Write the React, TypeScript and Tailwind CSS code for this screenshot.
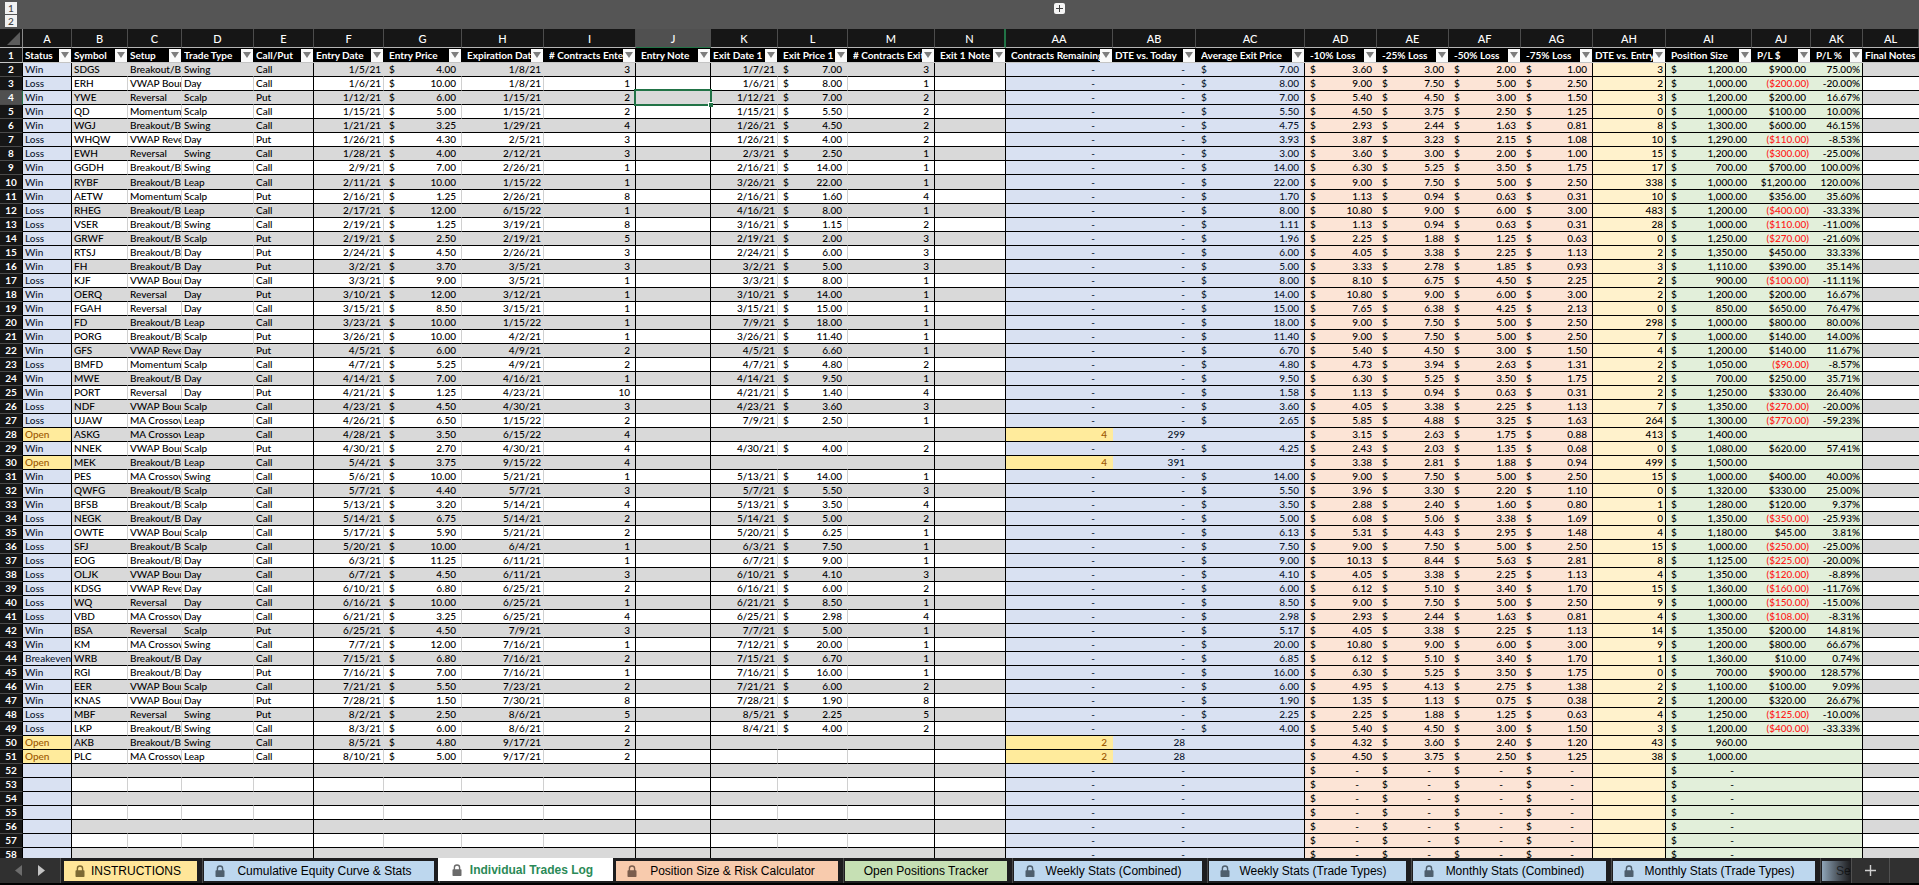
import React from "react";

type Column = {
  letter: string;
  title: string;
  width: string;
  pad: string;
  edge: "black" | "grid" | "none";
  fill: "stripe" | "blue" | "orange" | "yellow" | "green";
  filter?: boolean;
};

const COLUMNS: Column[] = [
  { letter: "A", title: "Status", width: "w-[49px]", pad: "pl-0.5", edge: "black", fill: "blue" },
  { letter: "B", title: "Symbol", width: "w-[56px]", pad: "pl-0.5", edge: "grid", fill: "stripe" },
  { letter: "C", title: "Setup", width: "w-[54px]", pad: "pl-0.5", edge: "grid", fill: "stripe" },
  { letter: "D", title: "Trade Type", width: "w-[72px]", pad: "pl-0.5", edge: "grid", fill: "stripe" },
  { letter: "E", title: "Call/Put", width: "w-[60px]", pad: "pl-0.5", edge: "black", fill: "stripe" },
  { letter: "F", title: "Entry Date", width: "w-[70px]", pad: "pl-0.5", edge: "grid", fill: "stripe" },
  { letter: "G", title: "Entry Price", width: "w-[78px]", pad: "pl-[5px]", edge: "grid", fill: "stripe" },
  { letter: "H", title: "Expiration Date", width: "w-[82px]", pad: "pl-[5px]", edge: "grid", fill: "stripe" },
  { letter: "I", title: "# Contracts Entered", width: "w-[92px]", pad: "pl-[5px]", edge: "black", fill: "stripe" },
  { letter: "J", title: "Entry Note", width: "w-[75px]", pad: "pl-[5px]", edge: "black", fill: "stripe" },
  { letter: "K", title: "Exit Date 1", width: "w-[67px]", pad: "pl-0.5", edge: "grid", fill: "stripe" },
  { letter: "L", title: "Exit Price 1", width: "w-[70px]", pad: "pl-[5px]", edge: "grid", fill: "stripe" },
  { letter: "M", title: "# Contracts Exited", width: "w-[87px]", pad: "pl-[5px]", edge: "black", fill: "stripe" },
  { letter: "N", title: "Exit 1 Note", width: "w-[71px]", pad: "pl-[5px]", edge: "black", fill: "stripe" },
  { letter: "AA", title: "Contracts Remaining", width: "w-[107px]", pad: "pl-[5px]", edge: "none", fill: "blue" },
  { letter: "AB", title: "DTE vs. Today", width: "w-[83px]", pad: "pl-0.5", edge: "none", fill: "blue" },
  { letter: "AC", title: "Average Exit Price", width: "w-[109px]", pad: "pl-[5px]", edge: "black", fill: "blue" },
  { letter: "AD", title: "-10% Loss", width: "w-[72px]", pad: "pl-[5px]", edge: "none", fill: "orange" },
  { letter: "AE", title: "-25% Loss", width: "w-[72px]", pad: "pl-[5px]", edge: "none", fill: "orange" },
  { letter: "AF", title: "-50% Loss", width: "w-[72px]", pad: "pl-[5px]", edge: "none", fill: "orange" },
  { letter: "AG", title: "-75% Loss", width: "w-[72px]", pad: "pl-[5px]", edge: "black", fill: "orange" },
  { letter: "AH", title: "DTE vs. Entry", width: "w-[73px]", pad: "pl-0.5", edge: "black", fill: "yellow" },
  { letter: "AI", title: "Position Size", width: "w-[86px]", pad: "pl-[5px]", edge: "none", fill: "green" },
  { letter: "AJ", title: "P/L $", width: "w-[59px]", pad: "pl-[5px]", edge: "none", fill: "green" },
  { letter: "AK", title: "P/L %", width: "w-[52px]", pad: "pl-[5px]", edge: "black", fill: "green" },
  { letter: "AL", title: "Final Notes", width: "w-auto", pad: "pl-0.5", edge: "none", fill: "stripe", filter: false },
];

/* status|symbol|setup|type|call/put|entry date|entry price|expiration|contracts|
   exit date|exit price|exit contracts|remaining|dte today|average exit|dte entry|p/l $|p/l % */
const TRADES = `
Win|SDGS|Breakout/Breakdown|Swing|Call|1/5/21|4.00|1/8/21|3|1/7/21|7.00|3|-|-|7.00|3|$900.00|75.00%
Loss|ERH|VWAP Bounce|Day|Call|1/6/21|10.00|1/8/21|1|1/6/21|8.00|1|-|-|8.00|2|($200.00)|-20.00%
Win|YWE|Reversal|Scalp|Put|1/12/21|6.00|1/15/21|2|1/12/21|7.00|2|-|-|7.00|3|$200.00|16.67%
Win|QD|Momentum|Scalp|Call|1/15/21|5.00|1/15/21|2|1/15/21|5.50|2|-|-|5.50|0|$100.00|10.00%
Win|WGJ|Breakout/Breakdown|Swing|Call|1/21/21|3.25|1/29/21|4|1/26/21|4.50|2|-|-|4.75|8|$600.00|46.15%
Loss|WHQW|VWAP Reversal|Day|Put|1/26/21|4.30|2/5/21|3|1/26/21|4.00|2|-|-|3.93|10|($110.00)|-8.53%
Loss|EWH|Reversal|Swing|Call|1/28/21|4.00|2/12/21|3|2/3/21|2.50|1|-|-|3.00|15|($300.00)|-25.00%
Win|GGDH|Breakout/Breakdown|Swing|Call|2/9/21|7.00|2/26/21|1|2/16/21|14.00|1|-|-|14.00|17|$700.00|100.00%
Win|RYBF|Breakout/Breakdown|Leap|Call|2/11/21|10.00|1/15/22|1|3/26/21|22.00|1|-|-|22.00|338|$1,200.00|120.00%
Win|AETW|Momentum|Scalp|Put|2/16/21|1.25|2/26/21|8|2/16/21|1.60|4|-|-|1.70|10|$356.00|35.60%
Loss|RHEG|Breakout/Breakdown|Leap|Call|2/17/21|12.00|6/15/22|1|4/16/21|8.00|1|-|-|8.00|483|($400.00)|-33.33%
Loss|VSER|Breakout/Breakdown|Swing|Call|2/19/21|1.25|3/19/21|8|3/16/21|1.15|2|-|-|1.11|28|($110.00)|-11.00%
Loss|GRWF|Breakout/Breakdown|Scalp|Put|2/19/21|2.50|2/19/21|5|2/19/21|2.00|3|-|-|1.96|0|($270.00)|-21.60%
Win|RTSJ|Breakout/Breakdown|Day|Put|2/24/21|4.50|2/26/21|3|2/24/21|6.00|3|-|-|6.00|2|$450.00|33.33%
Win|FH|Breakout/Breakdown|Day|Put|3/2/21|3.70|3/5/21|3|3/2/21|5.00|3|-|-|5.00|3|$390.00|35.14%
Loss|KJF|VWAP Bounce|Day|Call|3/3/21|9.00|3/5/21|1|3/3/21|8.00|1|-|-|8.00|2|($100.00)|-11.11%
Win|OERQ|Reversal|Day|Put|3/10/21|12.00|3/12/21|1|3/10/21|14.00|1|-|-|14.00|2|$200.00|16.67%
Win|FGAH|Reversal|Day|Call|3/15/21|8.50|3/15/21|1|3/15/21|15.00|1|-|-|15.00|0|$650.00|76.47%
Win|FD|Breakout/Breakdown|Leap|Call|3/23/21|10.00|1/15/22|1|7/9/21|18.00|1|-|-|18.00|298|$800.00|80.00%
Win|PORG|Breakout/Breakdown|Scalp|Put|3/26/21|10.00|4/2/21|1|3/26/21|11.40|1|-|-|11.40|7|$140.00|14.00%
Win|GFS|VWAP Reversal|Day|Put|4/5/21|6.00|4/9/21|2|4/5/21|6.60|1|-|-|6.70|4|$140.00|11.67%
Loss|BMFD|Momentum|Scalp|Call|4/7/21|5.25|4/9/21|2|4/7/21|4.80|2|-|-|4.80|2|($90.00)|-8.57%
Win|MWE|Breakout/Breakdown|Day|Call|4/14/21|7.00|4/16/21|1|4/14/21|9.50|1|-|-|9.50|2|$250.00|35.71%
Win|PORT|Reversal|Day|Put|4/21/21|1.25|4/23/21|10|4/21/21|1.40|4|-|-|1.58|2|$330.00|26.40%
Loss|NDF|VWAP Bounce|Scalp|Call|4/23/21|4.50|4/30/21|3|4/23/21|3.60|3|-|-|3.60|7|($270.00)|-20.00%
Loss|UJAW|MA Crossover|Leap|Call|4/26/21|6.50|1/15/22|2|7/9/21|2.50|1|-|-|2.65|264|($770.00)|-59.23%
Open|ASKG|MA Crossover|Leap|Call|4/28/21|3.50|6/15/22|4||||4|299||413||
Win|NNEK|VWAP Bounce|Scalp|Put|4/30/21|2.70|4/30/21|4|4/30/21|4.00|2|-|-|4.25|0|$620.00|57.41%
Open|MEK|Breakout/Breakdown|Leap|Call|5/4/21|3.75|9/15/22|4||||4|391||499||
Win|PES|MA Crossover|Swing|Call|5/6/21|10.00|5/21/21|1|5/13/21|14.00|1|-|-|14.00|15|$400.00|40.00%
Win|QWFG|Breakout/Breakdown|Scalp|Call|5/7/21|4.40|5/7/21|3|5/7/21|5.50|3|-|-|5.50|0|$330.00|25.00%
Win|BFSB|Breakout/Breakdown|Scalp|Call|5/13/21|3.20|5/14/21|4|5/13/21|3.50|4|-|-|3.50|1|$120.00|9.37%
Loss|NEGK|Breakout/Breakdown|Day|Call|5/14/21|6.75|5/14/21|2|5/14/21|5.00|2|-|-|5.00|0|($350.00)|-25.93%
Win|OWTE|VWAP Bounce|Scalp|Call|5/17/21|5.90|5/21/21|2|5/20/21|6.25|1|-|-|6.13|4|$45.00|3.81%
Loss|SFJ|Breakout/Breakdown|Scalp|Call|5/20/21|10.00|6/4/21|1|6/3/21|7.50|1|-|-|7.50|15|($250.00)|-25.00%
Loss|EOG|Breakout/Breakdown|Day|Call|6/3/21|11.25|6/11/21|1|6/7/21|9.00|1|-|-|9.00|8|($225.00)|-20.00%
Loss|OLJK|VWAP Bounce|Day|Call|6/7/21|4.50|6/11/21|3|6/10/21|4.10|3|-|-|4.10|4|($120.00)|-8.89%
Loss|KDSG|VWAP Reversal|Day|Call|6/10/21|6.80|6/25/21|2|6/16/21|6.00|2|-|-|6.00|15|($160.00)|-11.76%
Loss|WQ|Reversal|Day|Call|6/16/21|10.00|6/25/21|1|6/21/21|8.50|1|-|-|8.50|9|($150.00)|-15.00%
Loss|VBD|MA Crossover|Day|Call|6/21/21|3.25|6/25/21|4|6/25/21|2.98|4|-|-|2.98|4|($108.00)|-8.31%
Win|BSA|Reversal|Scalp|Put|6/25/21|4.50|7/9/21|3|7/7/21|5.00|1|-|-|5.17|14|$200.00|14.81%
Win|KM|MA Crossover|Swing|Call|7/7/21|12.00|7/16/21|1|7/12/21|20.00|1|-|-|20.00|9|$800.00|66.67%
Breakeven|WRB|Breakout/Breakdown|Day|Call|7/15/21|6.80|7/16/21|2|7/15/21|6.70|1|-|-|6.85|1|$10.00|0.74%
Win|RGI|Breakout/Breakdown|Day|Put|7/16/21|7.00|7/16/21|1|7/16/21|16.00|1|-|-|16.00|0|$900.00|128.57%
Win|EER|VWAP Bounce|Scalp|Call|7/21/21|5.50|7/23/21|2|7/21/21|6.00|2|-|-|6.00|2|$100.00|9.09%
Win|KNAS|VWAP Bounce|Day|Put|7/28/21|1.50|7/30/21|8|7/28/21|1.90|8|-|-|1.90|2|$320.00|26.67%
Loss|MBF|Reversal|Swing|Put|8/2/21|2.50|8/6/21|5|8/5/21|2.25|5|-|-|2.25|4|($125.00)|-10.00%
Loss|LKP|Breakout/Breakdown|Swing|Call|8/3/21|6.00|8/6/21|2|8/4/21|4.00|2|-|-|4.00|3|($400.00)|-33.33%
Open|AKB|Breakout/Breakdown|Swing|Call|8/5/21|4.80|9/17/21|2||||2|28||43||
Open|PLC|MA Crossover|Leap|Call|8/10/21|5.00|9/17/21|2||||2|28||38||
`
  .trim()
  .split("\n")
  .map((line) => line.split("|"));

const EMPTY_ROWS = 7;

const money = (cents: number) =>
  (cents / 100).toLocaleString("en-US", { minimumFractionDigits: 2, maximumFractionDigits: 2 });

/** Expands one trade into the values of columns A to AL. */
function toCells(t: string[]): string[] {
  const cents = Math.round(parseFloat(t[6]) * 100);
  const share = (pct: number) => money(Math.round((cents * pct) / 100));
  const size = money(cents * Number(t[8]) * 100);
  return [
    ...t.slice(0, 9),
    "",
    ...t.slice(9, 12),
    "",
    ...t.slice(12, 15),
    share(90),
    share(75),
    share(50),
    share(25),
    t[15],
    size,
    t[16],
    t[17],
    "",
  ];
}

const BLANK_CELLS = COLUMNS.map((c) =>
  ["AA", "AB", "AD", "AE", "AF", "AG", "AI"].includes(c.letter) ? "-" : "",
);

const ROWS = [...TRADES.map(toCells), ...Array.from({ length: EMPTY_ROWS }, () => BLANK_CELLS)];

const ACCOUNTING = ["G", "L", "AC", "AD", "AE", "AF", "AG", "AI"];
const TEXT_COLUMNS = ["A", "B", "C", "D", "E"];
const WIDE_RIGHT = ["I", "M", "AJ"];

function fillOf(col: Column, striped: boolean, open: boolean) {
  if (open && (col.letter === "A" || col.letter === "AA")) return "bg-[#ffeb9c] text-[#9c5700]";
  switch (col.fill) {
    case "blue":
      return "bg-[#d9e1f2] text-[#0d1830]";
    case "orange":
      return "bg-[#fce4d6] text-black";
    case "yellow":
      return "bg-[#fff2cc] text-black";
    case "green":
      return "bg-[#e2efda] text-black";
    default:
      return striped ? "bg-[#d9d9d9] text-black" : "bg-white text-black";
  }
}

function edgeOf(col: Column, striped: boolean) {
  if (col.edge === "black") return "border-r border-r-black";
  if (col.edge === "grid")
    return striped ? "border-r border-r-[#d9d9d9]" : "border-r border-r-[#d0d0d0]";
  return "";
}

function CellValue({ col, value }: { col: Column; value: string }) {
  if (!value) return null;
  if (ACCOUNTING.includes(col.letter)) {
    return (
      <div className={`flex justify-between pl-[5px] ${value === "-" ? "pr-[18px]" : "pr-[5px]"}`}>
        <span>$</span>
        <span>{value}</span>
      </div>
    );
  }
  if (TEXT_COLUMNS.includes(col.letter)) return <div className="overflow-hidden pl-0.5">{value}</div>;
  if (col.letter === "AA")
    return <div className={value === "-" ? "pr-[18px] text-right" : "pr-[6px] text-right"}>{value}</div>;
  if (col.letter === "AB") return <div className="pr-[11px] text-right">{value}</div>;
  if (value.startsWith("(")) return <div className="pr-0.5 text-right text-[#ff2018]">{value}</div>;
  if (WIDE_RIGHT.includes(col.letter)) return <div className="pr-[5px] text-right">{value}</div>;
  return <div className="pr-0.5 text-right">{value}</div>;
}

function FilterButton({ title }: { title: string }) {
  return (
    <button
      type="button"
      aria-label={`Filter ${title}`}
      className="flex h-[13px] w-3 shrink-0 items-center justify-center bg-[#fafafa]"
    >
      <svg viewBox="0 0 8 6" className="h-1.5 w-2" aria-hidden="true">
        <path d="M0 0h8L4 6z" fill="#7d7d7d" />
      </svg>
    </button>
  );
}

function OutlineButton({ label, name }: { label: string; name: string }) {
  return (
    <button
      type="button"
      aria-label={name}
      className="flex h-3 w-3 items-center justify-center bg-[#f2f2f2] text-[10px] leading-3 text-[#444]"
    >
      {label}
    </button>
  );
}

function Sheet() {
  return (
    <table className="w-full min-w-[1900px] table-fixed border-separate border-spacing-0 font-['Lato','Liberation_Sans',sans-serif] text-[10px] leading-[13px] font-medium">
      <colgroup>
        <col className="w-[23px]" />
        {COLUMNS.map((c) => (
          <col key={c.letter} className={c.width} />
        ))}
      </colgroup>
      <thead>
        <tr className="bg-[#555555]">
          <td className="h-[29px] p-0 align-top">
            <div className="flex flex-col items-end gap-px pt-0.5 pr-1.5">
              <OutlineButton label="1" name="Outline level 1" />
              <OutlineButton label="2" name="Outline level 2" />
            </div>
          </td>
          <td colSpan={14} className="p-0" />
          <td className="p-0 align-top">
            <div className="flex justify-center pt-[3px]">
              <button
                type="button"
                aria-label="Expand columns O to Z"
                className="flex h-[11px] w-[11px] items-center justify-center rounded-xs bg-[#f5f5f5]"
              >
                <svg viewBox="0 0 7 7" className="h-[7px] w-[7px]" aria-hidden="true">
                  <path d="M3 0h1v3h3v1H4v3H3V4H0V3h3z" fill="#444" />
                </svg>
              </button>
            </div>
          </td>
          <td colSpan={11} className="p-0" />
        </tr>
        <tr>
          <td className="h-[19px] border-r border-b border-r-[#8a8a8a] border-b-[#b5b5b5] bg-[#161616] p-0">
            <div className="flex justify-end pr-0.5">
              <svg viewBox="0 0 13 13" className="h-[13px] w-[13px]" aria-hidden="true">
                <path d="M13 0v13H0z" fill="#5c5c5c" />
              </svg>
            </div>
          </td>
          {COLUMNS.map((c) => (
            <th
              key={c.letter}
              scope="col"
              className={`h-[19px] border-b p-0 text-center text-[11px] font-medium text-white ${
                c.letter === "J"
                  ? "border-r border-r-[#505050] border-b-[#217346] bg-[#505050]"
                  : c.letter === "N"
                    ? "border-r-2 border-r-[#217346] border-b-[#b5b5b5] bg-[#161616]"
                    : "border-r border-r-[#4c4c4c] border-b-[#b5b5b5] bg-[#161616]"
              }`}
            >
              {c.letter}
            </th>
          ))}
        </tr>
        <tr className="bg-black font-bold text-white">
          <th
            scope="row"
            className="h-[15px] border-r border-b border-r-[#8a8a8a] border-b-[#c4c4c4] bg-[#161616] p-0 text-center"
          >
            1
          </th>
          {COLUMNS.map((c) => (
            <th key={c.letter} scope="col" className="h-[15px] border-b border-b-[#c4c4c4] p-0 text-left">
              <div className={`flex h-[14px] items-center pr-px ${c.pad}`}>
                <span className="min-w-0 flex-1 overflow-hidden whitespace-nowrap">{c.title}</span>
                {c.filter !== false && <FilterButton title={c.title} />}
              </div>
            </th>
          ))}
        </tr>
      </thead>
      <tbody>
        {ROWS.map((cells, i) => {
          const number = i + 2;
          const striped = number % 2 === 0;
          const height = number === 10 ? "h-[15px]" : "h-[14px]";
          const open = cells[0] === "Open";
          return (
            <tr key={number}>
              <th
                scope="row"
                className={`${height} border-r border-b border-b-[#4a4a4a] p-0 text-center font-bold text-white ${
                  number === 4 ? "border-r-[#217346] bg-[#505050]" : "border-r-black bg-[#161616]"
                }`}
              >
                {number}
              </th>
              {COLUMNS.map((c, k) => {
                const selected = number === 4 && c.letter === "J";
                return (
                  <td
                    key={c.letter}
                    className={`${height} border-b border-b-black p-0 whitespace-nowrap ${fillOf(c, striped, open)} ${edgeOf(c, striped)} ${
                      selected ? "relative" : "overflow-hidden"
                    }`}
                  >
                    {selected ? (
                      <div className="absolute -inset-0.5 z-10 border-2 border-[#217346]">
                        <div className="absolute -right-[3px] -bottom-[3px] h-[5px] w-[5px] border-t border-l border-white bg-[#217346]" />
                      </div>
                    ) : (
                      <CellValue col={c} value={cells[k]} />
                    )}
                  </td>
                );
              })}
            </tr>
          );
        })}
      </tbody>
    </table>
  );
}

const TABS = [
  { label: "INSTRUCTIONS", width: "w-[133px]", color: "bg-[#ffe699]", lock: "#7d6a33" },
  { label: "Cumulative Equity Curve & Stats", width: "w-[230px]", color: "bg-[#bdd7ee]", lock: "#4f5f6d" },
  { label: "Individual Trades Log", width: "w-[175px]", color: "bg-white", lock: "#6b6b6b", active: true },
  { label: "Position Size & Risk Calculator", width: "w-[222px]", color: "bg-[#f8cbad]", lock: "#7a5d4d" },
  { label: "Open Positions Tracker", width: "w-[162px]", color: "bg-[#c6e0b4]", lock: "" },
  { label: "Weekly Stats (Combined)", width: "w-[188px]", color: "bg-[#bdd7ee]", lock: "#4f5f6d" },
  { label: "Weekly Stats (Trade Types)", width: "w-[197px]", color: "bg-[#bdd7ee]", lock: "#4f5f6d" },
  { label: "Monthly Stats (Combined)", width: "w-[193px]", color: "bg-[#bdd7ee]", lock: "#4f5f6d" },
  { label: "Monthly Stats (Trade Types)", width: "w-[202px]", color: "bg-[#bdd7ee]", lock: "#4f5f6d" },
];

function Lock({ color }: { color: string }) {
  return (
    <svg viewBox="0 0 10 12" className="h-3 w-2.5 shrink-0" aria-hidden="true">
      <path d="M2.4 6V3.6a2.6 2.6 0 0 1 5.2 0V6" fill="none" stroke={color} strokeWidth="1.4" />
      <rect x="0.5" y="5.2" width="9" height="6.8" rx="0.8" fill={color} />
    </svg>
  );
}

function TabBar() {
  return (
    <nav
      aria-label="Sheets"
      className="flex h-[27px] shrink-0 border-b-2 border-b-black bg-[#1d1d1f] font-['Liberation_Sans',Arial,sans-serif] text-[12px] leading-5"
    >
      <div className="flex w-[61px] shrink-0 items-center gap-4 border-r border-r-[#555] bg-[#303030] pl-[15px]">
        <button type="button" aria-label="Previous sheet">
          <svg viewBox="0 0 7 11" className="h-[11px] w-[7px]" aria-hidden="true">
            <path d="M7 0v11L0 5.5z" fill="#6c6c6c" />
          </svg>
        </button>
        <button type="button" aria-label="Next sheet">
          <svg viewBox="0 0 7 11" className="h-[11px] w-[7px]" aria-hidden="true">
            <path d="M0 0v11l7-5.5z" fill="#c4c4c4" />
          </svg>
        </button>
      </div>
      <div className="flex min-w-0 flex-1 overflow-hidden pl-[3px]">
        {TABS.map((t) =>
          t.active ? (
            <button
              key={t.label}
              type="button"
              aria-current="page"
              className={`-ml-[3px] mr-[3px] flex h-[23px] shrink-0 items-center pr-3 pl-3.5 font-bold whitespace-nowrap text-[#2b8a57] ${t.width} ${t.color}`}
            >
              <Lock color={t.lock} />
              <span className="flex-1 text-center">{t.label}</span>
            </button>
          ) : (
            <div key={t.label} className="mr-px shrink-0 border-r border-r-[#4a4a4a] pt-[3px] pr-[3px]">
              <button
                type="button"
                className={`mr-0.5 flex h-5 items-center text-black ${t.lock ? "pr-2.5 pl-[11px]" : "px-3"} whitespace-nowrap ${t.width} ${t.color}`}
              >
                {t.lock && <Lock color={t.lock} />}
                <span className="flex-1 text-center">{t.label}</span>
              </button>
            </div>
          ),
        )}
        <div className="min-w-0 flex-1 pt-[3px]">
          <button
            type="button"
            className="h-5 w-full overflow-hidden bg-linear-to-r from-[#8fa5b8] to-[#1d1d1f] pl-3.5 text-left whitespace-nowrap text-black/60"
          >
            Se
          </button>
        </div>
      </div>
      <button
        type="button"
        aria-label="Add sheet"
        className="flex w-[39px] shrink-0 items-center justify-center border-x border-x-[#505050] bg-[#303030]"
      >
        <svg viewBox="0 0 11 11" className="h-[11px] w-[11px]" aria-hidden="true">
          <path d="M5.5 0v11M0 5.5h11" stroke="#d0d0d0" strokeWidth="1.4" />
        </svg>
      </button>
      <div className="w-[29px] shrink-0 bg-[#303030]" />
    </nav>
  );
}

export default function App() {
  return (
    <div className="flex h-screen flex-col overflow-hidden bg-black">
      <main className="min-h-0 flex-1 overflow-hidden">
        <Sheet />
      </main>
      <TabBar />
    </div>
  );
}
